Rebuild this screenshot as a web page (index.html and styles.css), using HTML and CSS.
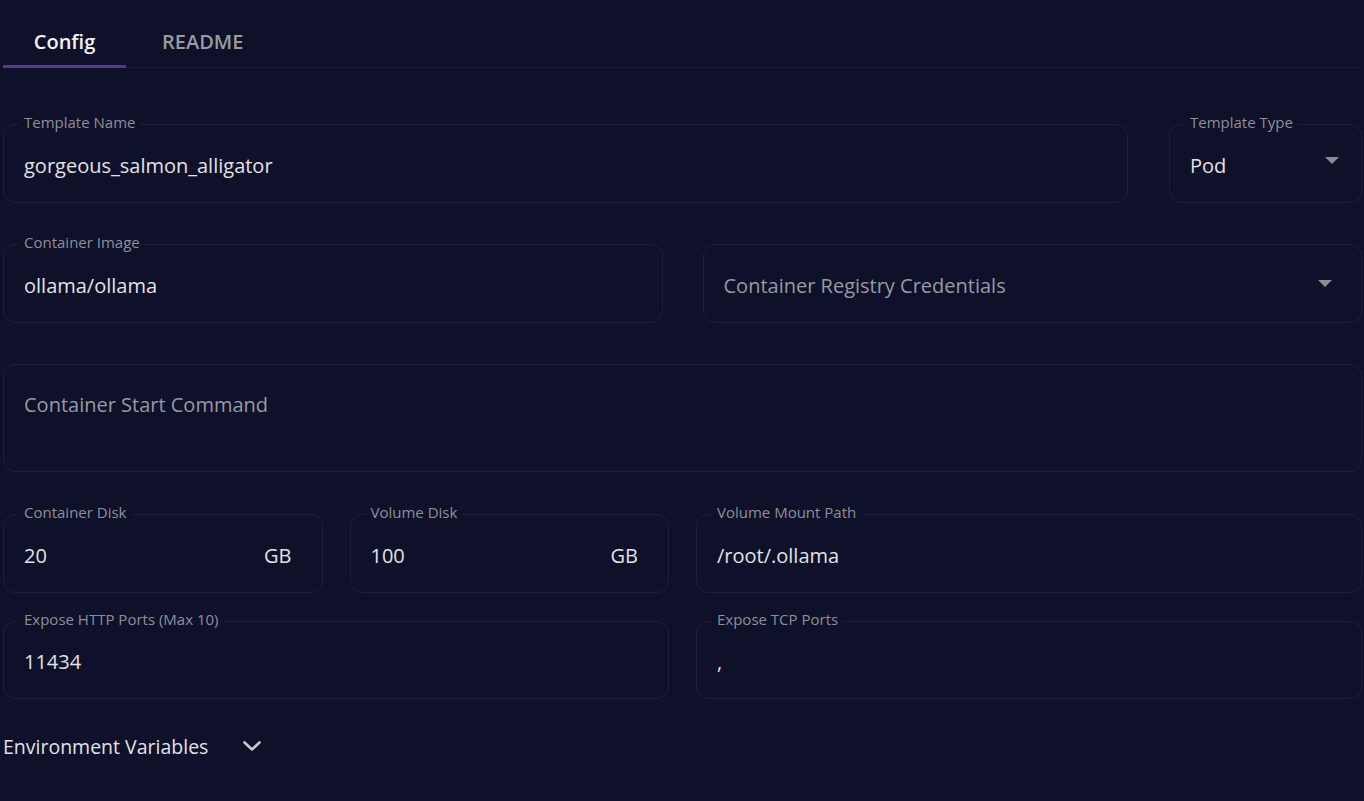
FILE: index.html
```html
<!DOCTYPE html>
<html lang="en">
<head>
<meta charset="utf-8">
<title>Template Config</title>
<link rel="stylesheet" href="styles.css">
</head>
<body>
<div class="page">
  <div class="tabs">
    <div class="tab active">Config</div>
    <div class="tab">README</div>
  </div>

  <div class="row row-1">
    <div class="field">
      <span class="label">Template Name</span>
      <span class="value">gorgeous_salmon_alligator</span>
    </div>
    <div class="field">
      <span class="label">Template Type</span>
      <span class="value">Pod</span>
      <svg class="caret" width="14" height="7" viewBox="0 0 14 7"><path d="M0 0h14L7 7z" fill="#8c8c92"/></svg>
    </div>
  </div>

  <div class="row row-2">
    <div class="field">
      <span class="label">Container Image</span>
      <span class="value">ollama/ollama</span>
    </div>
    <div class="field">
      <span class="placeholder">Container Registry Credentials</span>
      <svg class="caret caret-2" width="14" height="7" viewBox="0 0 14 7"><path d="M0 0h14L7 7z" fill="#8c8c92"/></svg>
    </div>
  </div>

  <div class="row row-3">
    <div class="field field-tall">
      <span class="placeholder">Container Start Command</span>
    </div>
  </div>

  <div class="row row-4">
    <div class="sub">
      <div class="field">
        <span class="label">Container Disk</span>
        <span class="value">20</span>
        <span class="suffix">GB</span>
      </div>
      <div class="field">
        <span class="label">Volume Disk</span>
        <span class="value">100</span>
        <span class="suffix">GB</span>
      </div>
    </div>
    <div class="field">
      <span class="label">Volume Mount Path</span>
      <span class="value">/root/.ollama</span>
    </div>
  </div>

  <div class="row row-5">
    <div class="field field-short">
      <span class="label">Expose HTTP Ports (Max 10)</span>
      <span class="value">11434</span>
    </div>
    <div class="field field-short">
      <span class="label">Expose TCP Ports</span>
      <span class="value">,</span>
    </div>
  </div>

  <div class="env">
    <span class="env-title">Environment Variables</span>
    <svg class="chev" width="20" height="14" viewBox="0 0 20 14"><path d="M2.5 3.5 10 10.5 17.5 3.5" fill="none" stroke="#c9c9cf" stroke-width="2.6" stroke-linecap="round" stroke-linejoin="round"/></svg>
  </div>
</div>
</body>
</html>
```

FILE: styles.css
```css
html, body {
  margin: 0;
  padding: 0;
  background: #0e1129;
  height: 100%;
}
body {
  font-family: "Open Sans", "Noto Sans", sans-serif;
  color: #e2e2e6;
}
.page {
  padding: 0 2px 0 3px;
}
.tabs {
  display: flex;
  height: 67px;
  border-bottom: 1px solid #171b33;
}
.tab {
  display: flex;
  align-items: center;
  justify-content: center;
  font-size: 20px;
  font-weight: 600;
  color: #9a9aa0;
  padding: 16px 20px 0;
  box-sizing: border-box;
}
.tab.active {
  width: 123px;
  color: #f2f2f4;
  border-bottom: 3px solid #5a3697;
  margin-bottom: -1px;
  padding-top: 18px;
}
.tab + .tab {
  margin-left: 16px;
}
.row {
  display: grid;
}
.row-1 {
  margin-top: 56px;
  grid-template-columns: 1fr 193px;
  column-gap: 41px;
}
.row-2 {
  margin-top: 41px;
  grid-template-columns: 1fr 1fr;
  column-gap: 40px;
}
.row-3 {
  margin-top: 41px;
  grid-template-columns: 1fr;
}
.row-4 {
  margin-top: 42px;
  grid-template-columns: 1fr 1fr;
  column-gap: 27px;
}
.row-5 {
  margin-top: 28px;
  grid-template-columns: 1fr 1fr;
  column-gap: 27px;
}
.sub {
  display: grid;
  grid-template-columns: 1fr 1fr;
  column-gap: 27px;
}
.field {
  position: relative;
  height: 79px;
  box-sizing: border-box;
  border: 1px solid #1c2037;
  border-radius: 12px;
  display: flex;
  align-items: center;
  padding: 4px 30px 0 20px;
}
.field-tall {
  height: 108px;
  align-items: flex-start;
  padding-top: 26px;
}
.field-short {
  height: 78px;
}
.label {
  position: absolute;
  top: -13px;
  left: 15px;
  padding: 0 5px;
  background: #0e1129;
  font-size: 15px;
  line-height: 20px;
  color: #8e8f99;
}
.value {
  flex: 1;
  font-size: 20px;
  line-height: 28px;
  color: #e2e2e6;
}
.placeholder {
  flex: 1;
  font-size: 20px;
  line-height: 28px;
  color: #979aa4;
}
.suffix {
  font-size: 20px;
  line-height: 28px;
  color: #e2e2e6;
}
.caret {
  margin-right: -8px;
  margin-bottom: 11px;
}
.caret-2 {
  margin-right: -1px;
  margin-bottom: 4px;
}
.env {
  display: flex;
  align-items: center;
  height: 40px;
  margin-top: 27px;
}
.env-title {
  font-size: 19.5px;
  color: #e2e2e6;
}
.chev {
  margin-left: 34px;
}
```
